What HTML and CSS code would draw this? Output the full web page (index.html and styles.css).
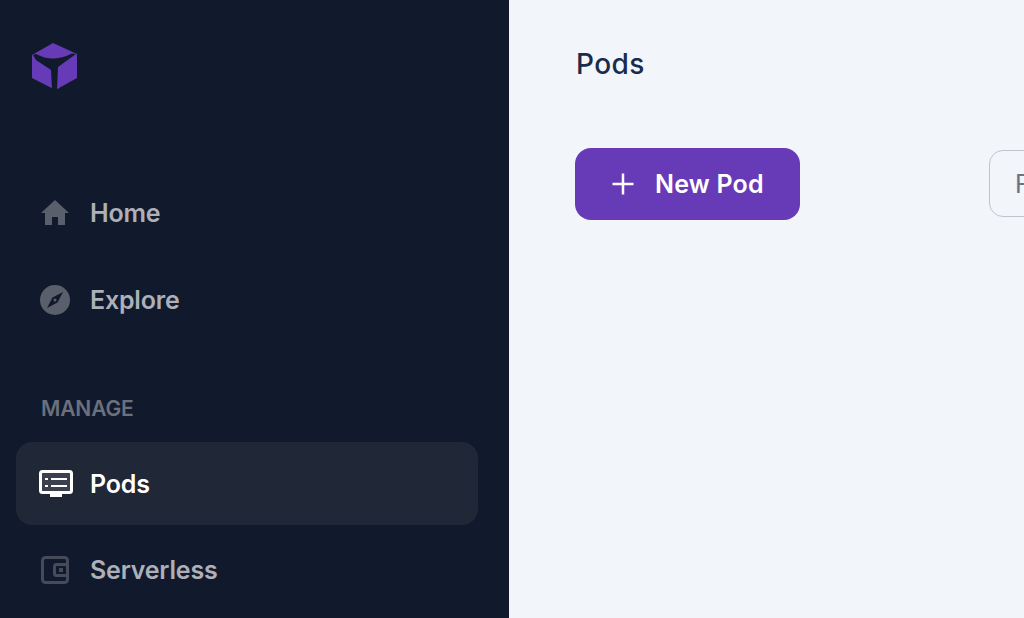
FILE: index.html
```html
<!DOCTYPE html>
<html lang="en">

<head>
    <meta charset="UTF-8">
    <meta name="viewport" content="width=device-width, initial-scale=1.0">
    <title>Pods</title>
    <link rel="stylesheet" href="styles.css">
</head>

<body>
    <aside class="sidebar">
        <div class="logo">
            <svg width="46" height="48" viewBox="0 0 46 48">
                <path d="M21 0 L45 11 V35 L23.5 47 L0 35 V12 Z" fill="#673ab7" />
                <path d="M1 12 L4 11 Q14 16 22 15.5 Q31 15 40 10.5 L44 11 L26 24 L25 47 L20 47 L19 27 L4 17 Z" fill="#111a2c" />
            </svg>
        </div>
        <nav class="nav">
            <a class="nav-item">
                <svg class="nav-icon" viewBox="0 0 30 30">
                    <path d="M15 2 L29 15 H25 V27 H18 V19 H12 V27 H5 V15 H1 Z" fill="currentColor" />
                </svg>
                <span>Home</span>
            </a>
            <a class="nav-item">
                <svg class="nav-icon" viewBox="0 0 30 30">
                    <circle cx="15" cy="15" r="15" fill="currentColor" />
                    <path d="M23 7 L17.5 17.5 L7 23 L12.5 12.5 Z" fill="#111a2c" />
                    <circle cx="15" cy="15" r="1.5" fill="currentColor" />
                </svg>
                <span>Explore</span>
            </a>
            <div class="nav-heading">MANAGE</div>
            <a class="nav-item active">
                <svg class="nav-icon" viewBox="0 0 34 28">
                    <rect x="1.5" y="1.5" width="31" height="21" rx="2" fill="#3a404e" stroke="currentColor" stroke-width="3" />
                    <rect x="11" y="24" width="12" height="3" fill="currentColor" />
                    <path d="M6 9 H9 M12 9 H28 M6 16 H9 M12 16 H28" stroke="currentColor" stroke-width="2" />
                </svg>
                <span>Pods</span>
            </a>
            <a class="nav-item">
                <svg class="nav-icon dim" viewBox="0 0 30 30">
                    <rect x="2.5" y="2.5" width="25" height="25" rx="3" fill="none" stroke="currentColor" stroke-width="3" />
                    <rect x="14.5" y="9.5" width="13" height="11" rx="2" fill="#111a2c" stroke="currentColor" stroke-width="3" />
                    <rect x="19" y="13" width="4" height="4" fill="currentColor" />
                </svg>
                <span>Serverless</span>
            </a>
        </nav>
    </aside>

    <main class="content">
        <h1 class="page-title">Pods</h1>
        <div class="toolbar">
            <button class="new-btn">
                <svg width="24" height="24" viewBox="0 0 24 24">
                    <path d="M12 1.5 V22.5 M1.5 12 H22.5" stroke="#fff" stroke-width="2.5" />
                </svg>
                New Pod
            </button>
            <input class="filter" type="text" placeholder="Filter by name">
        </div>
    </main>
</body>

</html>
```

FILE: styles.css
```css
html,
body {
    height: 100%;
}

body {
    margin: 0;
    display: flex;
    overflow: hidden;
    font-family: 'Inter', sans-serif;
    background-color: #f2f5fa;
}

.sidebar {
    width: 509px;
    flex-shrink: 0;
    height: 100%;
    overflow: hidden;
    background-color: #111a2c;
}

.logo {
    padding: 43px 0 0 32px;
    height: 171px;
    box-sizing: border-box;
}

.nav {
    padding: 0 31px 0 16px;
}

.nav-item {
    display: flex;
    align-items: center;
    gap: 20px;
    height: 83px;
    margin-bottom: 4px;
    padding-left: 24px;
    color: #adb0b8;
    font-size: 25px;
    font-weight: 600;
    letter-spacing: -0.2px;
    border-radius: 16px;
}

.nav-icon {
    width: 30px;
    height: 30px;
    color: #5a5f6c;
}

.nav-icon.dim {
    color: #454b59;
}

.nav-item.active {
    margin-bottom: 3px;
    background-color: #202736;
    color: #ffffff;
}

.nav-item.active .nav-icon {
    color: #ffffff;
    width: 34px;
    margin-left: -1px;
    margin-right: -3px;
}

.nav-heading {
    margin: 54px 0 19px;
    padding-left: 25px;
    color: #6b707c;
    font-size: 21px;
    font-weight: 600;
    line-height: 28px;
    letter-spacing: -0.15px;
}

.content {
    flex: 1;
    min-width: 0;
    overflow: hidden;
    padding-left: 66px;
}

.page-title {
    margin: 43px 0 0 1px;
    color: #1a2b4b;
    font-size: 28px;
    font-weight: 500;
    line-height: 42px;
    letter-spacing: 0.4px;
}

.toolbar {
    display: flex;
    align-items: flex-start;
    margin-top: 63px;
}

.new-btn {
    display: flex;
    align-items: center;
    gap: 20px;
    flex-shrink: 0;
    width: 225px;
    height: 72px;
    padding: 0 0 0 36px;
    background-color: #673ab7;
    color: #ffffff;
    font-family: inherit;
    font-size: 25px;
    font-weight: 600;
    letter-spacing: 0.2px;
    border: none;
    border-radius: 16px;
}

.filter {
    flex-shrink: 0;
    width: 320px;
    height: 67px;
    box-sizing: border-box;
    margin: 2px 0 0 189px;
    padding: 0 25px;
    background: transparent;
    font-family: inherit;
    font-size: 25px;
    border: 1px solid #c0c4cc;
    border-radius: 14px;
}

.filter::placeholder {
    color: #6b7280;
}
```
